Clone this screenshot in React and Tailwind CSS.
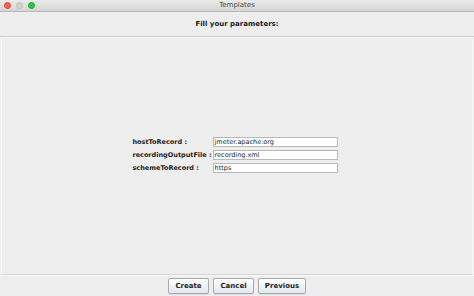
import React from 'react';

const fields = [
  { label: 'hostToRecord :', value: 'jmeter.apache.org' },
  { label: 'recordingOutputFile :', value: 'recording.xml' },
  { label: 'schemeToRecord :', value: 'https' },
];

const Light = ({ color, border }) => (
  <span className={`block w-[7px] h-[7px] rounded-full ${color} border ${border}`} />
);

const Button = ({ children, width }) => (
  <button
    className={`${width} h-[16px] rounded-[2px] border border-[#a9a9a9] bg-gradient-to-b from-[#ffffff] to-[#dfe7f1] text-[7px] font-bold text-[#222] leading-none shadow-[0_1px_0_rgba(0,0,0,0.08)]`}
  >
    {children}
  </button>
);

export default function App() {
  return (
    <div
      className="w-[474px] h-[296px] bg-[#eeeeee] flex flex-col overflow-hidden"
      style={{ fontFamily: '"DejaVu Sans", "Liberation Sans", sans-serif' }}
    >
      {/* title bar */}
      <div className="relative h-[12px] bg-gradient-to-b from-[#ebebeb] to-[#d5d5d5] border-b border-[#b9b9b9] flex items-center">
        <div className="flex items-center gap-[5px] pl-[4px]">
          <Light color="bg-[#fc5f57]" border="border-[#e0443e]" />
          <Light color="bg-[#d0d0d0]" border="border-[#c2c2c2]" />
          <Light color="bg-[#2dc840]" border="border-[#1aab29]" />
        </div>
        <div className="absolute inset-0 flex items-center justify-center text-[7px] text-[#4a4a4a]">
          Templates
        </div>
      </div>

      {/* header */}
      <div className="h-[25px] flex items-center justify-center border-b border-[#cfcfcf] bg-[#eeeeee]">
        <span className="text-[7px] font-bold text-[#1c1c1c]">Fill your parameters:</span>
      </div>

      {/* content */}
      <div className="flex-1 mx-[1px] border-x border-t border-[#f8f8f8] border-b border-b-[#d4d4d4] bg-[#eeeeee] flex items-center justify-center">
        <div className="grid grid-cols-[auto_125px] gap-x-[1px] gap-y-[3px] items-center ml-[-4px] mt-[-2px]">
          {fields.map((f) => (
            <React.Fragment key={f.label}>
              <span className="text-[6.5px] font-bold text-[#1e1e1e] leading-none whitespace-nowrap">{f.label}</span>
              <div className="h-[10px] bg-white border border-[#b8b8b8] flex items-center px-[1px] text-[6.5px] text-[#222] leading-none overflow-hidden whitespace-nowrap">
                {f.value}
              </div>
            </React.Fragment>
          ))}
        </div>
      </div>

      {/* buttons */}
      <div className="h-[21px] flex items-center justify-center gap-[4px] border-t border-[#f8f8f8]">
        <Button width="w-[41px]">Create</Button>
        <Button width="w-[41px]">Cancel</Button>
        <Button width="w-[48px]">Previous</Button>
      </div>
    </div>
  );
}
